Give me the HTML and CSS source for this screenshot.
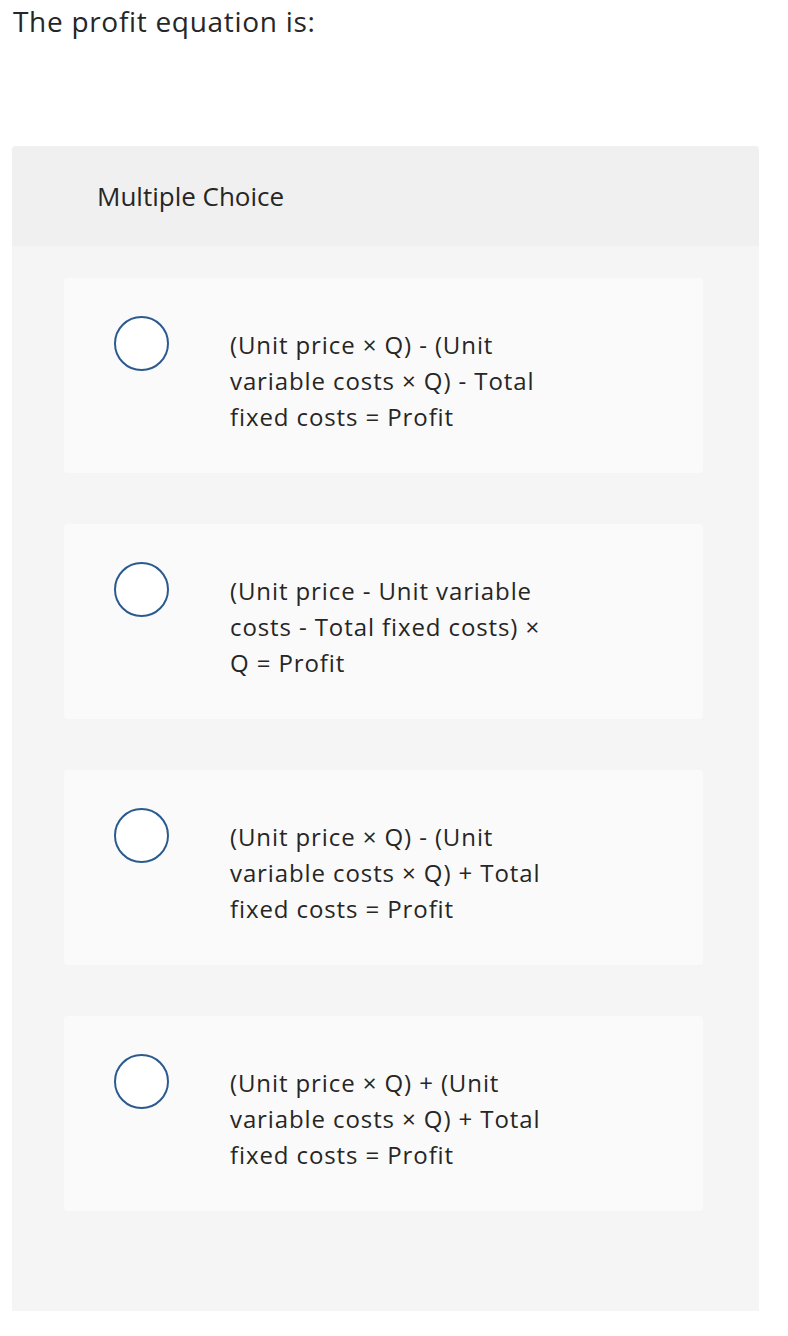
FILE: index.html
```html
<!DOCTYPE html>
<html lang="en">

<head>
	<meta charset="utf-8" />
	<title>The profit equation</title>
	<link rel="stylesheet" href="styles.css">
</head>

<body>
	<p class="prompt">The profit equation is:</p>

	<div class="question">
		<div class="question-header">Multiple Choice</div>
		<div class="choices">
			<label class="choice">
				<input type="radio" name="answer">
				<span class="radio"></span>
				<span class="choice-text">(Unit price × Q) - (Unit variable costs × Q) - Total fixed costs = Profit</span>
			</label>
			<label class="choice">
				<input type="radio" name="answer">
				<span class="radio"></span>
				<span class="choice-text">(Unit price - Unit variable costs - Total fixed costs) × Q = Profit</span>
			</label>
			<label class="choice">
				<input type="radio" name="answer">
				<span class="radio"></span>
				<span class="choice-text">(Unit price × Q) - (Unit variable costs × Q) + Total fixed costs = Profit</span>
			</label>
			<label class="choice">
				<input type="radio" name="answer">
				<span class="radio"></span>
				<span class="choice-text">(Unit price × Q) + (Unit variable costs × Q) + Total fixed costs = Profit</span>
			</label>
		</div>
	</div>
</body>

</html>
```

FILE: styles.css
```css
body {
	margin: 0;
	background: #fff;
	color: #262626;
	font-family: "Open Sans", "Liberation Sans", sans-serif;
	font-variant-ligatures: none;
}

.prompt {
	margin: 0;
	padding: 3px 0 0 13px;
	font-size: 28px;
	line-height: 36px;
	letter-spacing: 0.7px;
}

.question {
	width: 747px;
	margin: 107px 0 0 12px;
	background: #f5f5f5;
	border-radius: 4px 4px 0 0;
}

.question-header {
	height: 100px;
	display: flex;
	align-items: center;
	padding-left: 85px;
	background: #f0f0f0;
	border-radius: 4px 4px 0 0;
	font-size: 26px;
}

.choices {
	display: flex;
	flex-direction: column;
	gap: 51px;
	padding: 32px 56px 100px 52px;
}

.choice {
	display: flex;
	align-items: flex-start;
	height: 195px;
	box-sizing: border-box;
	padding: 38px 20px 0 50px;
	background: #fafafa;
	border-radius: 4px;
	cursor: pointer;
}

.choice input {
	display: none;
}

.radio {
	flex: none;
	width: 51px;
	height: 51px;
	border: 2px solid #2b5a8e;
	border-radius: 50%;
	background: #fff;
}

.choice-text {
	width: 326px;
	margin: 11px 0 0 61px;
	font-size: 24px;
	line-height: 36px;
	letter-spacing: 0.9px;
}
```
